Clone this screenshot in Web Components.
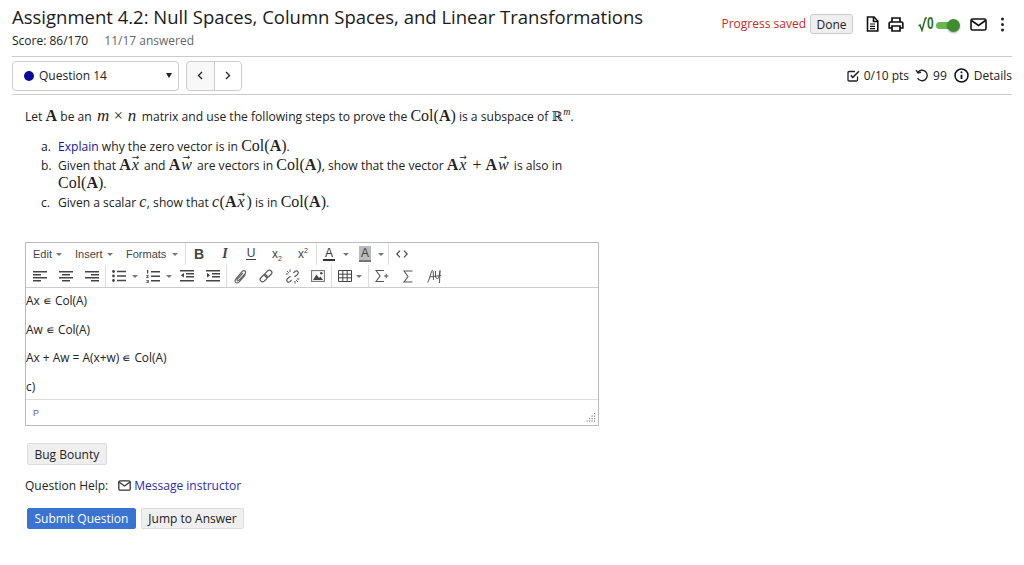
<!DOCTYPE html>
<html>
<head>
<meta charset="utf-8">
<title>Assignment 4.2</title>
<style>
  html, body { margin: 0; background: #fff; }
  body { font-family: "Open Sans", sans-serif; font-size: 12px; color: #1a1a1a; }
</style>
</head>
<body>
<hw-page>
  <hw-header></hw-header>
  <hw-nav></hw-nav>
  <hw-question></hw-question>
  <mce-editor></mce-editor>
  <hw-actions></hw-actions>
</hw-page>

<script>
const ICONS = {
  doc: '<svg width="13" height="16" viewBox="0 0 13 16" fill="none" stroke="#111" stroke-width="1.6"><path d="M1.500 1h6.500L11.800 5v10H1.500z"/><path d="M7.500 1v4.500h4.300"/><path d="M4 8h5M4 10.300h5M4 12.600h5" stroke-width="1.200"/></svg>',
  print: '<svg width="16" height="15" viewBox="0 0 16 15" fill="none" stroke="#111" stroke-width="1.700"><path d="M4 5V1h8v4"/><path d="M4 11H1.200V6.200Q1.200 5 2.400 5h11.200q1.200 0 1.200 1.200V11H12"/><path d="M4 9h8v5H4z"/></svg>',
  mail: '<svg width="17" height="13" viewBox="0 0 17 13" fill="none" stroke="#111" stroke-width="1.600"><rect x="1" y="1" width="15" height="11" rx="1.600"/><path d="M1.500 2.500L8.500 7.500l7-5"/></svg>',
  mailSmall: '<svg width="13" height="11" viewBox="0 0 13 11" fill="none" stroke="#333" stroke-width="1.300"><rect x=".8" y=".8" width="11.400" height="9.400" rx="1.300"/><path d="M1 2l5.500 4L12 2"/></svg>',
  dots: '<svg width="5" height="15" viewBox="0 0 5 15" fill="#222"><circle cx="2.500" cy="2" r="1.500"/><circle cx="2.500" cy="7.500" r="1.500"/><circle cx="2.500" cy="13" r="1.500"/></svg>',
  check: '<svg width="13" height="12" viewBox="0 0 13 12" fill="none" stroke="#222" stroke-width="1.300"><path d="M10.500 6.500v3.300q0 1.200-1.200 1.200H2.200Q1 11 1 9.800V2.700q0-1.200 1.200-1.200H8"/><path d="M3.800 5.400l2 2L12 1.200" stroke-width="1.500"/></svg>',
  history: '<svg width="14" height="13" viewBox="0 0 14 13" fill="none" stroke="#222" stroke-width="1.400"><path d="M3 3.200A5.200 5.200 0 1 1 2.600 9.200"/><path d="M1 1.200L3 4l3-.6"/></svg>',
  info: '<svg width="15" height="15" viewBox="0 0 15 15" fill="none" stroke="#111" stroke-width="1.500"><circle cx="7.500" cy="7.500" r="6.500"/><path d="M7.500 6.700v4.300" stroke-width="1.800"/><circle cx="7.500" cy="4.300" r="1" fill="#111" stroke="none"/></svg>',
  alignL: '<svg width="14" height="11" viewBox="0 0 14 11" fill="#444"><path d="M0 0h14v1.500H0zM0 3h8v1.500H0zM0 6h14v1.500H0zM0 9h8v1.500H0z"/></svg>',
  alignC: '<svg width="14" height="11" viewBox="0 0 14 11" fill="#444"><path d="M0 0h14v1.500H0zM3 3h8v1.500H3zM0 6h14v1.500H0zM3 9h8v1.500H3z"/></svg>',
  alignR: '<svg width="14" height="11" viewBox="0 0 14 11" fill="#444"><path d="M0 0h14v1.500H0zM6 3h8v1.500H6zM0 6h14v1.500H0zM6 9h8v1.500H6z"/></svg>',
  bullets: '<svg width="14" height="12" viewBox="0 0 14 12" fill="#444"><circle cx="1.500" cy="1.500" r="1.400"/><circle cx="1.500" cy="6" r="1.400"/><circle cx="1.500" cy="10.500" r="1.400"/><path d="M5 .8h9v1.400H5zM5 5.300h9v1.400H5zM5 9.800h9v1.400H5z"/></svg>',
  numbers: '<svg width="14" height="13" viewBox="0 0 14 13" fill="#444"><path d="M1 0h1.200v3.400H1zM.3 5h2.400v.8L1.400 7.200h1.300V8H.3v-.8l1.300-1.400H.3zM.3 10h2.400v3H.3v-.7h1.600v-.5H.8v-.6h1.100v-.5H.3z"/><path d="M5 1h9v1.400H5zM5 5.500h9v1.400H5zM5 10h9v1.400H5z"/></svg>',
  outdent: '<svg width="14" height="12" viewBox="0 0 14 12" fill="#444"><path d="M0 0h14v1.500H0zM6 3h8v1.500H6zM6 6h8v1.500H6zM0 10h14v1.500H0z"/><path d="M4 3v4.500L.8 5.250z"/></svg>',
  indent: '<svg width="14" height="12" viewBox="0 0 14 12" fill="#444"><path d="M0 0h14v1.500H0zM6 3h8v1.500H6zM6 6h8v1.500H6zM0 10h14v1.500H0z"/><path d="M1 3v4.500l3.200-2.250z"/></svg>',
  attach: '<svg width="13" height="15" viewBox="0 0 13 15" fill="none" stroke="#666" stroke-width="1.200"><path d="M11.500 5.500L5.200 12.800q-1.900 2-3.500.6-1.400-1.500.3-3.500L8.200 2.400q1.500-1.500 2.800-.4 1.200 1.200-.1 2.800L5 11.200q-1 1-1.700.4-.6-.7.300-1.800L8.800 4"/></svg>',
  link: '<svg width="14" height="14" viewBox="0 0 14 14" fill="none" stroke="#555" stroke-width="1.200"><rect x="6.900" y=".7" width="4.800" height="8" rx="2.400" transform="rotate(45 9.300 4.700)"/><rect x="2.300" y="5.300" width="4.800" height="8" rx="2.400" transform="rotate(45 4.700 9.300)"/></svg>',
  unlink: '<svg width="15" height="15" viewBox="0 0 15 15" fill="none" stroke="#555" stroke-width="1.200"><path d="M8.500 4l1.500-1.600q1.400-1.200 2.700-.1 1.200 1.400 0 2.800L11 6.800q-.8.700-1.600.6"/><path d="M6.500 11l-1.500 1.600q-1.400 1.200-2.700.1-1.200-1.400 0-2.800L4 8.200q.8-.7 1.600-.6"/><path d="M5 .5V3M.8 5h2.500M2 2l1.800 1.800M10 12v2.500M11.800 10h2.500M11.300 11.300l1.800 1.800" stroke-width="1"/></svg>',
  image: '<svg width="14" height="12" viewBox="0 0 14 12" fill="none"><rect x=".6" y=".6" width="12.800" height="10.800" stroke="#777" stroke-width="1.100"/><path d="M2 10l3.500-5.500L8 8l1.500-1.500L12 10z" fill="#444"/><circle cx="10.300" cy="3.300" r="1.200" fill="#444"/></svg>',
  table: '<svg width="14" height="12" viewBox="0 0 14 12" fill="none" stroke="#444" stroke-width="1"><path d="M.5.500h13v11H.5zM.5 4.200h13M.5 7.800h13M4.800.500v11M9.200.500v11"/></svg>',
  sigmaPlus: '<svg width="14" height="14" viewBox="0 0 14 14" fill="none" stroke="#555" stroke-width="1"><path d="M9 1.500H1l4 5.500-4 5.500h8" stroke-width="1.100"/><path d="M9 7h4.500M11.200 4.800v4.400"/></svg>',
  sigma: '<svg width="10" height="13" viewBox="0 0 10 13" fill="none" stroke="#555" stroke-width="1.100"><path d="M9.500 1H1l4 5.500L1 12h8.500"/></svg>',
  scribble: '<svg width="15" height="15" viewBox="0 0 15 15" fill="none" stroke="#555" stroke-width="1"><path d="M.5 13.500C2.500 11 3.500 5 4.500 2.500 5 1 6 1 6.200 3L6.500 11M2.500 8C6 7.500 10 7 14 6.500M8.500 2V7C8.500 10 11.500 10.500 12 8L13 1.500 12.500 14"/></svg>',
  code: '<svg width="12" height="8" viewBox="0 0 12 8" fill="none" stroke="#444" stroke-width="1.100"><path d="M4 .7L.8 4 4 7.300M8 .7L11.200 4 8 7.300"/></svg>'
};

class UiIcon extends HTMLElement {
  constructor() {
    super();
    this.attachShadow({ mode: "open" });
    this.shadowRoot.innerHTML = `<style>:host{display:inline-flex;align-items:center;justify-content:center;line-height:0}</style>` + (ICONS[this.getAttribute("name")] || "");
  }
}
customElements.define("ui-icon", UiIcon);

class HwPage extends HTMLElement {
  constructor() {
    super();
    this.attachShadow({ mode: "open" });
    this.shadowRoot.innerHTML = `<style>:host{display:block;width:1000px;padding:0 0 0 12px}</style><slot></slot>`;
  }
}
customElements.define("hw-page", HwPage);

class HwHeader extends HTMLElement {
  constructor() {
    super();
    this.attachShadow({ mode: "open" });
    this.shadowRoot.innerHTML = `
    <style>
      :host{display:flex;justify-content:space-between;height:56px;border-bottom:1px solid #ccc}
      h1{margin:4px 0 0;font-size:18.5px;font-weight:400;line-height:26px;color:#1a1a1a;white-space:nowrap}
      .sub{margin-top:2px;line-height:17px;font-size:12px;color:#222}
      .sub span{color:#666;margin-left:13px}
      .tools{display:flex;align-items:flex-start;padding-top:14px;padding-right:7px}
      .saved{color:#c62a24;line-height:20px;margin-right:4px}
      button{font:12px "Open Sans",sans-serif;color:#222;width:43px;height:20px;padding:0;background:#efefef;border:1px solid #ccc;border-radius:3px}
      .ic{display:flex;align-items:center;height:20px}
      .doc{margin-left:13px}
      .print{margin-left:9px}
      .sqrt{margin-left:14px;width:18px;align-items:center;color:#2c6e1f}
      .sqrt svg{flex:none}
      .sqrt span{display:inline-block;font:700 16px "Liberation Sans",sans-serif;transform:scaleX(.75);transform-origin:left center}
      .track{position:relative;width:18px;height:7px;border-radius:4px;background:#68b84f;margin-top:2px}
      .knob{position:absolute;right:-6px;top:-3px;width:13px;height:13px;border-radius:50%;background:#3e8e2f;box-shadow:0 1px 2px rgba(0,0,0,.35)}
      .mail{margin-left:16px}
      .dots{margin-left:13px}
    </style>
    <div>
      <h1>Assignment 4.2: Null Spaces, Column Spaces, and Linear Transformations</h1>
      <div class="sub">Score: 86/170 <span>11/17 answered</span></div>
    </div>
    <div class="tools">
      <div class="saved">Progress saved</div>
      <button>Done</button>
      <div class="ic doc"><ui-icon name="doc"></ui-icon></div>
      <div class="ic print"><ui-icon name="print"></ui-icon></div>
      <div class="ic sqrt"><svg width="9" height="15" viewBox="0 0 9 15" fill="none" stroke="#2c6e1f" stroke-width="1.500"><path d="M.5 9L2 8l2 5.500L7.500 1H9"/></svg><span>0</span></div>
      <div class="ic"><div class="track"><div class="knob"></div></div></div>
      <div class="ic mail"><ui-icon name="mail"></ui-icon></div>
      <div class="ic dots"><ui-icon name="dots"></ui-icon></div>
    </div>`;
  }
}
customElements.define("hw-header", HwHeader);

class HwNav extends HTMLElement {
  constructor() {
    super();
    this.attachShadow({ mode: "open" });
    this.shadowRoot.innerHTML = `
    <style>
      :host{display:flex;align-items:center;justify-content:space-between;height:37px;border-bottom:1px solid #ccc;font-size:12px;color:#222}
      .left{display:flex;gap:7px;align-items:center}
      .sel{box-sizing:border-box;width:167px;height:30px;border:1px solid #ccc;border-radius:4px;display:flex;align-items:center;padding:0 6px 0 11px}
      .dot{width:10px;height:10px;border-radius:50%;background:#0a0a96;margin-right:5px}
      .caret{margin-left:auto;width:0;height:0;border:3px solid transparent;border-top:5px solid #222;border-bottom:0}
      .pager{box-sizing:border-box;display:flex;height:30px;width:56px;border:1px solid #ccc;border-radius:4px;background:#f8f8f8}
      .pager div{flex:1;display:flex;align-items:center;justify-content:center}
      .pager div+div{border-left:1px solid #ccc;background:#fff;border-radius:0 4px 4px 0}
      .right{display:flex;align-items:center}
      .right ui-icon{margin-right:4px}
      .g{display:flex;align-items:center}
      .g.det ui-icon{margin-right:5px}
    </style>
    <div class="left">
      <div class="sel"><span class="dot"></span>Question 14<span class="caret"></span></div>
      <div class="pager">
        <div><svg width="6" height="9" viewBox="0 0 6 9" fill="none" stroke="#222" stroke-width="1.300"><path d="M5 1L1.500 4.500 5 8"/></svg></div>
        <div><svg width="6" height="9" viewBox="0 0 6 9" fill="none" stroke="#222" stroke-width="1.300"><path d="M1 1l3.500 3.500L1 8"/></svg></div>
      </div>
    </div>
    <div class="right">
      <div class="g" style="margin-right:6px"><ui-icon name="check"></ui-icon>0/10 pts</div>
      <div class="g" style="margin-right:7px"><ui-icon name="history"></ui-icon>99</div>
      <div class="g det"><ui-icon name="info"></ui-icon>Details</div>
    </div>`;
  }
}
customElements.define("hw-nav", HwNav);

class HwQuestion extends HTMLElement {
  constructor() {
    super();
    this.attachShadow({ mode: "open" });
    this.shadowRoot.innerHTML = `
    <style>
      :host{display:block;box-sizing:border-box;height:147px;padding:12px 0 0 13px;font-size:12.1px;color:#222}
      p{margin:0;line-height:20px;white-space:nowrap}
      ol{list-style:none;margin:11px 0 0;padding:0 0 0 16px;counter-reset:q}
      li{display:flex;line-height:18.600px;white-space:nowrap;counter-increment:q}
      li::before{content:counter(q,lower-alpha) ".";width:17px;flex:none}
      a{color:#1515a3;text-decoration:none}
      .m{font-family:"Liberation Serif",serif;font-size:16px;line-height:1;color:#222}
      .m i{letter-spacing:.5px}
      .big{font-family:"Liberation Serif",serif;font-style:italic;font-size:17px;line-height:1;color:#222;letter-spacing:.5px}
      .bm{margin-left:2px}
      .bn{margin-right:2px}
      .x{margin:0 5px 0 4px}
      .vec{position:relative;display:inline-block;font-style:italic;margin:0 2px 0 1px;line-height:1}
      .vec::before{content:"→";position:absolute;left:0;right:0;top:-6px;text-align:center;font:normal 9px/12px "DejaVu Sans",sans-serif}
      .plus{margin:0 4px}
      sup{font-size:10px;line-height:0;font-style:italic;margin-left:1px}
      .r{font-family:"DejaVu Serif",serif;font-size:13px}
    </style>
    <p>Let <b class="m">A</b> be an <span class="big bm">m</span><span class="m x">×</span><span class="big bn">n</span> matrix and use the following steps to prove the <span class="m">Col(<b>A</b>)</span> is a subspace of <span class="m"><span class="r">ℝ</span><sup>m</sup></span>.</p>
    <ol>
      <li><span><a href="#">Explain</a> why the zero vector is in <span class="m">Col(<b>A</b>)</span>.</span></li>
      <li><span>Given that <span class="m"><b>A</b><span class="vec">x</span></span> and <span class="m"><b>A</b><span class="vec">w</span></span> are vectors in <span class="m">Col(<b>A</b>)</span>, show that the vector <span class="m"><b>A</b><span class="vec">x</span><span class="plus">+</span><b>A</b><span class="vec">w</span></span> is also in<br><span class="m">Col(<b>A</b>)</span>.</span></li>
      <li><span>Given a scalar <span class="m"><i>c</i></span>, show that <span class="m"><i>c</i>(<b>A</b><span class="vec">x</span>)</span> is in <span class="m">Col(<b>A</b>)</span>.</span></li>
    </ol>`;
  }
}
customElements.define("hw-question", HwQuestion);

class MceBtn extends HTMLElement {
  constructor() {
    super();
    this.attachShadow({ mode: "open" });
    const w = this.getAttribute("w") || "26";
    const caret = this.hasAttribute("caret");
    this.shadowRoot.innerHTML = `
    <style>
      :host{display:flex;align-items:center;justify-content:${caret ? "flex-start" : "center"};width:${w}px;height:100%;color:#444;box-sizing:border-box;${caret ? "padding-left:6px;" : ""}}
      .c{width:0;height:0;border:3px solid transparent;border-top:3.500px solid #777;border-bottom:0;margin-left:auto;margin-right:${this.getAttribute("cr") || 4}px}
    </style><slot></slot>${caret ? '<span class="c"></span>' : ""}`;
  }
}
customElements.define("mce-btn", MceBtn);

class MceEditor extends HTMLElement {
  constructor() {
    super();
    this.attachShadow({ mode: "open" });
    this.shadowRoot.innerHTML = `
    <style>
      :host{box-sizing:border-box;width:574px;height:184px;margin:0 0 0 13px;border:1px solid #bbb;font-family:"Liberation Sans",Arial,sans-serif;display:flex;flex-direction:column}
      .bar{height:44px;border-bottom:1px solid #ccc;flex:none;display:flex;flex-direction:column}
      .row{display:flex;height:22px;padding-left:1px}
      .g{display:flex;height:100%;border-right:1px solid #ddd}
      .g.none{border-right:0}
      .menu{font-size:11px;color:#444}
      .body{flex:1;font-family:"Open Sans",sans-serif;font-size:11.9px;color:#222;border-bottom:1px solid #ddd;padding-top:4px;overflow:hidden}
      .body div{height:28.700px;line-height:17px;white-space:nowrap}
      .status{height:25px;flex:none;display:flex;align-items:center;justify-content:space-between;padding:0 2px 0 7px;font-size:9px;color:#666}
      .status svg{align-self:flex-end;margin-bottom:2px}
      .fb{font:700 14px "Liberation Sans",sans-serif;color:#444}
      .fi{font:italic 700 14px "Liberation Serif",serif;color:#444}
      .fu{font-size:12px;color:#444;border-bottom:1.500px solid #444;line-height:11px;padding:0 1px}
      .fs{font-size:12px;color:#444}
      .fs sub,.fs sup{font-size:7px;line-height:0}
      .a1{font-size:12px;color:#333;border-bottom:2px solid #333;line-height:12px;padding:0 2px}
      .a2{font-size:12px;color:#444;background:#bbb;border-bottom:2px solid #777;line-height:14px;padding:0 2px}
    </style>
    <div class="bar">
      <div class="row">
        <div class="g menu">
          <mce-btn w="42" caret cr="7">Edit</mce-btn>
          <mce-btn w="51" caret cr="7">Insert</mce-btn>
          <mce-btn w="65" caret cr="7">Formats</mce-btn>
        </div>
        <div class="g">
          <mce-btn><span class="fb">B</span></mce-btn>
          <mce-btn><span class="fi">I</span></mce-btn>
          <mce-btn><span class="fu">U</span></mce-btn>
          <mce-btn><span class="fs">x<sub>2</sub></span></mce-btn>
          <mce-btn><span class="fs">x<sup>2</sup></span></mce-btn>
        </div>
        <div class="g">
          <mce-btn w="36" caret cr="4"><span class="a1">A</span></mce-btn>
          <mce-btn w="35" caret cr="4"><span class="a2">A</span></mce-btn>
        </div>
        <div class="g none"><mce-btn><ui-icon name="code"></ui-icon></mce-btn></div>
      </div>
      <div class="row">
        <div class="g">
          <mce-btn><ui-icon name="alignL"></ui-icon></mce-btn>
          <mce-btn><ui-icon name="alignC"></ui-icon></mce-btn>
          <mce-btn><ui-icon name="alignR"></ui-icon></mce-btn>
        </div>
        <div class="g">
          <mce-btn w="34" caret cr="2"><ui-icon name="bullets"></ui-icon></mce-btn>
          <mce-btn w="34" caret cr="2"><ui-icon name="numbers"></ui-icon></mce-btn>
          <mce-btn><ui-icon name="outdent"></ui-icon></mce-btn>
          <mce-btn><ui-icon name="indent"></ui-icon></mce-btn>
        </div>
        <div class="g">
          <mce-btn><ui-icon name="attach"></ui-icon></mce-btn>
          <mce-btn><ui-icon name="link"></ui-icon></mce-btn>
          <mce-btn><ui-icon name="unlink"></ui-icon></mce-btn>
          <mce-btn><ui-icon name="image"></ui-icon></mce-btn>
        </div>
        <div class="g"><mce-btn w="36" caret cr="6"><ui-icon name="table"></ui-icon></mce-btn></div>
        <div class="g none">
          <mce-btn><ui-icon name="sigmaPlus"></ui-icon></mce-btn>
          <mce-btn><ui-icon name="sigma"></ui-icon></mce-btn>
          <mce-btn><ui-icon name="scribble"></ui-icon></mce-btn>
        </div>
      </div>
    </div>
    <div class="body">
      <div>Ax ∊ Col(A)</div>
      <div>Aw ∊ Col(A)</div>
      <div>Ax + Aw = A(x+w) ∊ Col(A)</div>
      <div>c)</div>
    </div>
    <div class="status">
      <span>P</span>
      <svg width="10" height="10" viewBox="0 0 10 10" fill="#888"><path d="M8 0h1.200v1.200H8zM8 2.500h1.200v1.200H8zM5.500 2.500h1.200v1.200H5.500zM8 5h1.200v1.200H8zM5.500 5h1.200v1.200H5.500zM3 5h1.200v1.200H3zM8 7.500h1.200v1.200H8zM5.500 7.500h1.200v1.200H5.500zM3 7.500h1.200v1.200H3zM.5 7.500h1.200v1.200H.5z"/></svg>
    </div>`;
  }
}
customElements.define("mce-editor", MceEditor);

class HwActions extends HTMLElement {
  constructor() {
    super();
    this.attachShadow({ mode: "open" });
    this.shadowRoot.innerHTML = `
    <style>
      :host{display:block;padding:17px 0 0 15px;font-size:12px;color:#222}
      button{font:12px "Open Sans",sans-serif;color:#222;height:22px;padding:0 6.500px;background:#efefef;border:1px solid #ddd;border-radius:2px}
      .help{display:flex;align-items:center;margin:9px 0 0 -2px;height:22px}
      .help ui-icon{margin:0 3px 0 10px}
      a{color:#2b2bb0;text-decoration:none}
      .btns{display:flex;gap:5px;margin-top:12px}
      .btns button{height:21px}
      .primary{background:#3b74d0;border-color:#3b74d0;color:#fff}
    </style>
    <button>Bug Bounty</button>
    <div class="help">Question Help:<ui-icon name="mailSmall"></ui-icon><a href="#">Message instructor</a></div>
    <div class="btns"><button class="primary">Submit Question</button><button>Jump to Answer</button></div>`;
  }
}
customElements.define("hw-actions", HwActions);
</script>
</body>
</html>
